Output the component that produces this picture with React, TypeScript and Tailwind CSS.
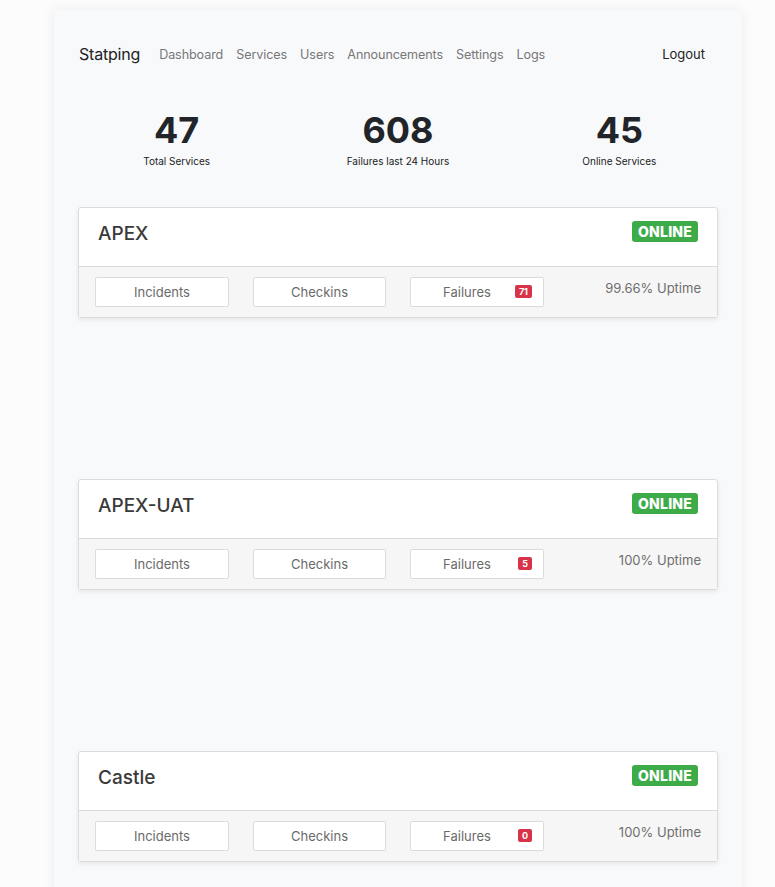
const NAV_LINKS = ["Dashboard", "Services", "Users", "Announcements", "Settings", "Logs"];

type Stat = {value: string; label: string};

const STATS: Stat[] = [
  {value: "47", label: "Total Services"},
  {value: "608", label: "Failures last 24 Hours"},
  {value: "45", label: "Online Services"},
];

type Service = {name: string; failures: number; uptime: string};

const SERVICES: Service[] = [
  {name: "APEX", failures: 71, uptime: "99.66%"},
  {name: "APEX-UAT", failures: 5, uptime: "100%"},
  {name: "Castle", failures: 0, uptime: "100%"},
];

const ServiceCard = ({name, failures, uptime}: Service) => {
  return (
    <div className="bg-white border border-[#dcdcdc] rounded-[3px] shadow-[0_2px_4px_rgba(0,0,0,0.08)] h-[111px] flex flex-col">
      <div className="h-[59px] flex items-start justify-between pl-[19px] pr-[19px] pt-[13px] border-b border-[#dcdcdc]">
        <h4 className="mt-[1px] text-[19px] font-medium text-[#3a3a3a] leading-[24px]">{name}</h4>
        <span className="bg-[#3dab48] text-white text-[14px] font-extrabold leading-[21px] px-[6px] rounded-[3px] tracking-[0.2px]">
          ONLINE
        </span>
      </div>
      <div className="flex-1 bg-[#f6f6f6] flex items-start pl-[16px] pr-[16px] pt-[10px]">
        <button className="w-[134px] h-[30px] pt-[2px] bg-white border border-[#dcdcdc] rounded-[2px] text-[13px] text-[#6a6a6a]">
          Incidents
        </button>
        <button className="ml-[24px] w-[133px] h-[30px] pt-[2px] bg-white border border-[#dcdcdc] rounded-[2px] text-[13px] text-[#6a6a6a]">
          Checkins
        </button>
        <button className="ml-[24px] w-[134px] h-[30px] pt-[2px] bg-white border border-[#dcdcdc] rounded-[2px] text-[13px] text-[#6a6a6a] flex items-center justify-center pr-[20px] relative">
          <span>Failures</span>
          <span className="absolute right-[11px] top-[7px] bg-[#d9334a] text-white text-[9px] font-bold leading-[13px] px-[4px] rounded-[2px]">
            {failures}
          </span>
        </button>
        <p className="ml-auto mt-[1px] text-[13px] text-[#6f6f6f] leading-[20px]">{uptime} Uptime</p>
      </div>
    </div>
  );
};

const App = () => {
  return (
    <div className="min-h-[887px] bg-[#fcfcfc] font-['Inter','Noto_Sans',sans-serif] overflow-hidden">
      <div className="ml-[54px] mt-[10px] w-[688px] bg-[#f8f9fb] shadow-[0_0_12px_rgba(0,0,0,0.07)] pb-[40px]">
        <nav className="flex items-center h-[88px] pl-[25px] pr-[37px]">
          <span className="text-[16px] text-[#222] tracking-[-0.2px]">Statping</span>
          <div className="flex gap-[13px] ml-[19px] mt-[2px]">
            {NAV_LINKS.map((link) => (
              <a key={link} className="text-[12.6px] text-[#777] tracking-[-0.1px]">
                {link}
              </a>
            ))}
          </div>
          <a className="ml-auto mt-[2px] text-[13px] text-[#222]">Logout</a>
        </nav>
        <div className="grid grid-cols-3 px-[12px] pt-[12px]">
          {STATS.map((stat) => (
            <div key={stat.label} className="flex flex-col items-center">
              <span className="text-[36px] font-bold text-[#212529] leading-[40px]">{stat.value}</span>
              <span className="text-[10px] text-[#222] leading-[12px] mt-[5px]">{stat.label}</span>
            </div>
          ))}
        </div>
        <div className="px-[24px] mt-[40px] flex flex-col gap-[161px]">
          {SERVICES.map((service) => (
            <ServiceCard key={service.name} {...service} />
          ))}
        </div>
      </div>
    </div>
  );
};

export default App;
